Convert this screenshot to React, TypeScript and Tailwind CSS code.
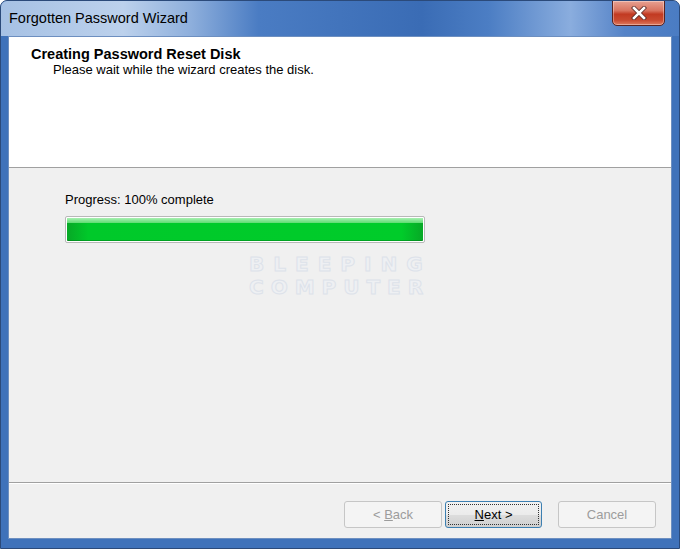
import React from "react";

const ui = { fontFamily: '"Liberation Sans", Arial, sans-serif' };

export default function App() {
  return (
    <div
      className="w-[680px] h-[549px] flex flex-col rounded-t-[7px] border border-[#2b4a7a] bg-[#3f72ba] overflow-hidden"
      style={ui}
    >
      {/* Title bar */}
      <div className="relative h-[35px] flex items-start bg-[linear-gradient(90deg,#a6c1e4_0%,#bcd1ec_18%,#8eafdc_28%,#4a7cc3_38%,#3a6cb5_62%,#4c7ec4_72%,#8aadde_84%,#5583c7_92%,#4a7cc3_100%)]">
        <span className="pl-[8px] pt-[8px] text-[14.5px] leading-[18px] text-black">
          Forgotten Password Wizard
        </span>
        {/* Close button */}
        <div className="absolute right-[14px] top-[-1px] w-[53px] h-[26px] rounded-b-[5px] border border-[#5a2320] bg-[linear-gradient(180deg,#e7a192_0%,#d8735f_40%,#c23a22_55%,#c94a30_80%,#de7a5e_100%)] shadow-[inset_0_0_0_1px_rgba(255,255,255,0.35)] flex items-center justify-center">
          <svg width="16" height="14" viewBox="0 0 16 14">
            <path
              d="M3 2 L13 12 M13 2 L3 12"
              stroke="#5a2a26"
              strokeWidth="4.2"
              strokeLinecap="square"
            />
            <path
              d="M3 2 L13 12 M13 2 L3 12"
              stroke="#ffffff"
              strokeWidth="2.6"
              strokeLinecap="square"
            />
          </svg>
        </div>
      </div>

      {/* Client area */}
      <div className="mx-[7px] flex-1 flex flex-col border border-[#6d8fc0] bg-[#f0f0f0]">
        {/* Header */}
        <div className="h-[131px] bg-white border-b border-[#a0a0a0] pt-[9px]">
          <div className="pl-[22px] text-[14.5px] font-bold leading-[16px] text-black">
            Creating Password Reset Disk
          </div>
          <div className="pl-[44px] text-[13px] leading-[15px] text-black">
            Please wait while the wizard creates the disk.
          </div>
        </div>

        {/* Body */}
        <div className="h-[314px] flex flex-col pl-[56px] pt-[24px]">
          <div className="text-[13px] leading-[16px] text-black">
            Progress: 100% complete
          </div>
          <div className="mt-[8px] w-[360px] h-[27px] rounded-[2px] border border-[#b8b8b8] bg-white p-px">
            <div className="relative w-full h-full rounded-[1px] bg-[linear-gradient(90deg,#07a826_0%,#00c92a_6%,#00cc2a_94%,#07a826_100%)] shadow-[inset_0_-1px_0_rgba(0,90,20,0.35)]">
              <div className="absolute left-0 right-0 top-0 h-[5px] bg-[linear-gradient(180deg,#a9f0b2_0%,#5fdc72_100%)]" />
            </div>
          </div>
          {/* Watermark */}
          <div className="ml-[184px] mt-[10px] flex flex-col gap-[1px] text-[20px] leading-[22px] font-bold tracking-[9px] text-[#eef0f3] [-webkit-text-stroke:1px_#dde2ea]" style={{ fontFamily: '"DejaVu Sans", sans-serif' }}>
            <span>BLEEPING</span>
            <span className="tracking-[7px]">COMPUTER</span>
          </div>
        </div>

        {/* Footer */}
        <div className="border-t border-[#a0a0a0] flex-1 shadow-[inset_0_1px_0_#ffffff] flex items-start pt-[18px] pl-[335px]">
          <button className="w-[98px] h-[27px] rounded-[3px] border border-[#c6c6c6] bg-[#f4f4f4] text-[13px] text-[#9c9c9c]">
            &lt; <span className="underline">B</span>ack
          </button>
          <button className="ml-[3px] w-[97px] h-[27px] rounded-[3px] border border-[#3c7fb1] bg-[linear-gradient(180deg,#f2f2f2_0%,#ebebeb_50%,#dddddd_51%,#cfcfcf_100%)] p-[2px] text-[13px] text-black">
            <span className="flex h-full w-full items-center justify-center border border-dotted border-[#333]">
              <span className="underline">N</span>ext &gt;
            </span>
          </button>
          <button className="ml-[16px] w-[98px] h-[27px] rounded-[3px] border border-[#c6c6c6] bg-[#f4f4f4] text-[13px] text-[#9c9c9c]">
            Cancel
          </button>
        </div>
      </div>
      <div className="h-[9px]" />
    </div>
  );
}
